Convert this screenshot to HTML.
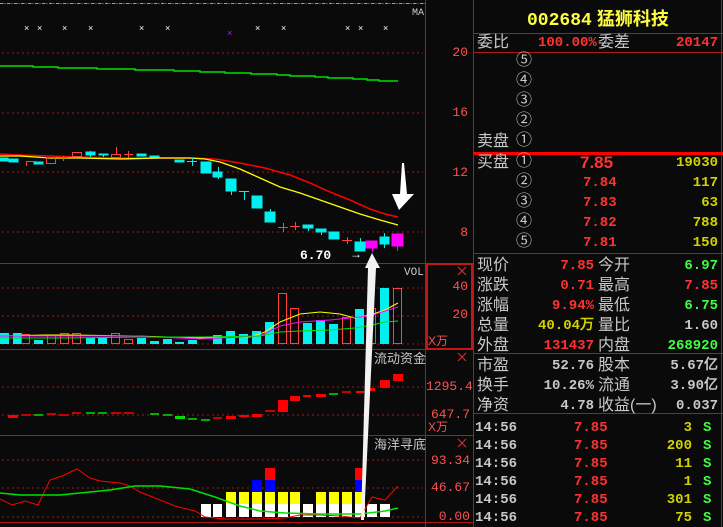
<!DOCTYPE html>
<html><head><meta charset="utf-8"><style>
html,body{margin:0;padding:0;background:#0a0a0a;width:723px;height:527px;overflow:hidden}
body{position:relative;font-family:"Liberation Sans","Noto Sans CJK SC",sans-serif}
.t{position:absolute;font-size:14px;line-height:16px;white-space:nowrap}
.r{text-align:right}
.g{color:#c8c8c8}.red{color:#ff3232}.y{color:#d2d200}.gr{color:#40ff40}.w{color:#e8e8e8}
.mono{font-family:"Liberation Mono",monospace;font-weight:bold}
.ax{position:absolute;font-family:"Liberation Mono",monospace;font-size:13px;color:#ff5050;text-align:right;width:40px;left:428px}
.c{font-size:16px}
</style></head><body>
<svg width="723" height="527" style="position:absolute;left:0;top:0">
<line x1="0" y1="3.5" x2="425" y2="3.5" stroke="#3cc" stroke-dasharray="4,3"/>
<line x1="0" y1="3.5" x2="425" y2="3.5" stroke="#b22" stroke-dasharray="3,4" stroke-dashoffset="4"/>
<line x1="425.5" y1="0" x2="425.5" y2="527" stroke="#b01818"/>
<line x1="473.5" y1="0" x2="473.5" y2="527" stroke="#b01818"/>
<line x1="721.5" y1="0" x2="721.5" y2="527" stroke="#b01818"/>
<line x1="0" y1="263.5" x2="473" y2="263.5" stroke="#b01818"/>
<line x1="0" y1="349.5" x2="473" y2="349.5" stroke="#b01818"/>
<line x1="0" y1="435.5" x2="473" y2="435.5" stroke="#b01818"/>
<line x1="0" y1="522.5" x2="473" y2="522.5" stroke="#b01818"/>
<rect x="427" y="264" width="45" height="85" fill="none" stroke="#c01818" stroke-width="2"/>
<g stroke="#a01818" stroke-dasharray="2,3">
<line x1="2" y1="53" x2="423" y2="53"/><line x1="2" y1="113" x2="423" y2="113"/>
<line x1="2" y1="172" x2="423" y2="172"/><line x1="2" y1="232" x2="423" y2="232"/>
<line x1="2" y1="288" x2="423" y2="288"/><line x1="2" y1="316" x2="423" y2="316"/><line x1="2" y1="344" x2="423" y2="344"/>
<line x1="2" y1="387" x2="423" y2="387"/><line x1="2" y1="415" x2="423" y2="415"/>
<line x1="2" y1="460" x2="423" y2="460"/><line x1="2" y1="488" x2="423" y2="488"/><line x1="2" y1="517" x2="423" y2="517"/>
</g>
<g stroke="#b01818"><line x1="473" y1="33.5" x2="723" y2="33.5"/><line x1="473" y1="52.5" x2="723" y2="52.5"/>
<line x1="473" y1="253.5" x2="723" y2="253.5"/><line x1="473" y1="353.5" x2="723" y2="353.5"/><line x1="473" y1="413.5" x2="723" y2="413.5"/></g>
<rect x="473" y="152" width="250" height="3" fill="#f00"/>
<g fill="#fff" font-size="9" font-family="Liberation Sans">
<text x="24" y="31">×</text><text x="37" y="31">×</text><text x="62" y="31">×</text><text x="88" y="31">×</text><text x="139" y="31">×</text><text x="165" y="31">×</text><text x="255" y="31">×</text><text x="281" y="31">×</text><text x="345" y="31">×</text><text x="358" y="31">×</text><text x="383" y="31">×</text></g>
<text x="227" y="36" fill="#a020f0" font-size="9">×</text>
<polyline fill="none" stroke="#00e000" stroke-width="1.5" points="0,66 33,66 33,67 58,67 58,68 97,68 97,69 135,69 135,70 174,70 174,71 200,71 200,72 225,72 225,73 251,73 251,74 277,74 277,75 290,75 290,76 315,76 315,77 328,77 328,78 353,78 353,79 367,79 367,80 379,80 379,81 398,81"/>
<polyline fill="none" stroke="#f00" stroke-width="1.5" points="0,154 20,155 50,156 80,157 120,158 160,158 190,158 215,159 240,163 265,168 290,175 310,183 330,192 350,200 370,209 385,214 398,217"/>
<polyline fill="none" stroke="#ff0" stroke-width="1.3" points="0,156 20,156 50,158 80,158 120,159 160,158 190,158 205,159 220,162 240,169 260,178 280,187 300,193 320,200 340,207 360,214 380,220 398,225"/>
<g fill="#00f0f0" stroke="#00f0f0">
<rect x="0" y="158" width="8" height="3"/><rect x="9" y="159" width="9" height="3"/><rect x="34" y="162" width="9" height="2"/>
<rect x="86" y="152" width="9" height="3"/><line x1="90.5" y1="151" x2="90.5" y2="157"/>
<rect x="99" y="154" width="9" height="1"/><line x1="103.5" y1="154" x2="103.5" y2="157"/>
<rect x="137" y="154" width="9" height="2"/><rect x="150" y="156" width="9" height="1"/>
<rect x="175" y="160" width="9" height="2"/><line x1="187" y1="161.5" x2="197" y2="161.5"/><line x1="192.5" y1="158" x2="192.5" y2="166"/>
<rect x="201" y="162" width="10" height="11"/>
<rect x="213" y="172" width="9" height="5"/><line x1="218.5" y1="167" x2="218.5" y2="179"/>
<rect x="226" y="179" width="10" height="12"/><line x1="231.5" y1="191" x2="231.5" y2="195"/>
<line x1="239" y1="191.5" x2="249" y2="191.5"/><line x1="244.5" y1="191" x2="244.5" y2="200"/>
<rect x="252" y="196" width="10" height="12"/><rect x="265" y="212" width="10" height="10"/><line x1="270.5" y1="209" x2="270.5" y2="212"/>
<rect x="303" y="225" width="10" height="3"/><line x1="308.5" y1="228" x2="308.5" y2="231"/>
<rect x="316" y="229" width="10" height="3"/><line x1="321.5" y1="232" x2="321.5" y2="235"/>
<rect x="329" y="232" width="10" height="7"/>
<rect x="355" y="242" width="10" height="9"/><line x1="360.5" y1="238" x2="360.5" y2="242"/>
<rect x="380" y="237" width="9" height="7"/><line x1="384.5" y1="233" x2="384.5" y2="248"/>
</g>
<g fill="none" stroke="#ff4040">
<line x1="26" y1="161.5" x2="36" y2="161.5"/><line x1="26.5" y1="161" x2="26.5" y2="166"/>
<rect x="46.5" y="157.5" width="9" height="6"/><line x1="59" y1="157.5" x2="68" y2="157.5"/><line x1="63.5" y1="156" x2="63.5" y2="161"/>
<rect x="72.5" y="152.5" width="9" height="4"/>
<rect x="111.5" y="154.5" width="9" height="3"/><line x1="116.5" y1="147" x2="116.5" y2="154"/>
<line x1="124" y1="154.5" x2="133" y2="154.5"/><line x1="128.5" y1="151" x2="128.5" y2="158"/>
<line x1="278" y1="227.5" x2="288" y2="227.5"/><line x1="283.5" y1="223" x2="283.5" y2="232"/>
<line x1="290" y1="226.5" x2="300" y2="226.5"/><line x1="295.5" y1="222" x2="295.5" y2="230"/>
<line x1="342" y1="240.5" x2="352" y2="240.5"/><line x1="347.5" y1="237" x2="347.5" y2="244"/>
</g>
<g fill="#f0f" stroke="#f0f"><rect x="366" y="241" width="11" height="7"/><line x1="372.5" y1="248" x2="372.5" y2="252"/>
<rect x="392" y="234" width="11" height="12"/><line x1="397.5" y1="246" x2="397.5" y2="251"/></g>
<text x="300" y="259" fill="#fff" font-size="13" font-weight="bold" font-family="Liberation Mono">6.70</text>
<text x="350" y="258" fill="#fff" font-size="12">→</text>
<g fill="#00f0f0"><rect x="0" y="333" width="9" height="11"/><rect x="13" y="333" width="9" height="11"/><rect x="34" y="340" width="9" height="4"/><rect x="86" y="338" width="9" height="6"/><rect x="98" y="338" width="9" height="6"/><rect x="137" y="338" width="9" height="6"/><rect x="150" y="341" width="9" height="3"/><rect x="163" y="339" width="9" height="5"/><rect x="175" y="342" width="9" height="2"/><rect x="188" y="340" width="9" height="4"/><rect x="213" y="335" width="9" height="9"/><rect x="226" y="331" width="9" height="13"/><rect x="239" y="334" width="9" height="10"/><rect x="252" y="331" width="9" height="13"/><rect x="265" y="322" width="9" height="22"/><rect x="303" y="323" width="9" height="21"/><rect x="316" y="320" width="9" height="24"/><rect x="329" y="324" width="9" height="20"/><rect x="355" y="309" width="9" height="35"/><rect x="380" y="288" width="9" height="56"/></g>
<g fill="none" stroke="#ff4040"><rect x="21.5" y="334.5" width="8" height="9"/><rect x="47.5" y="335.5" width="8" height="8"/><rect x="60.5" y="333.5" width="8" height="10"/><rect x="72.5" y="333.5" width="8" height="10"/><rect x="111.5" y="333.5" width="8" height="10"/><rect x="124.5" y="339.5" width="8" height="4"/><rect x="278.5" y="293.5" width="8" height="50"/><rect x="290.5" y="308.5" width="8" height="35"/><rect x="342.5" y="317.5" width="8" height="26"/><rect x="367.5" y="308.5" width="8" height="35"/><rect x="393.5" y="288.5" width="8" height="55"/></g>
<polyline fill="none" stroke="#ff0" points="0,336 45,335 70,335 135,336 200,338 250,337 265,332 280,322 300,314 320,312 340,314 355,318 370,315 385,310 398,303"/>
<polyline fill="none" stroke="#f0f" points="0,336 70,336 135,336 200,339 260,336 280,326 300,322 330,320 350,318 370,316 385,311 398,307"/>
<polyline fill="none" stroke="#00e000" points="0,338 70,338 135,337 200,337 260,336 280,332 300,331 330,330 355,328 372,325 385,322 398,321"/>
<g fill="#f00"><rect x="8" y="415" width="10" height="3"/><rect x="278" y="400" width="10" height="12"/><rect x="290" y="396" width="10" height="5"/><rect x="380" y="380" width="10" height="8"/><rect x="393" y="374" width="10" height="7"/><rect x="367" y="388" width="8" height="3"/><rect x="356" y="391" width="8" height="2"/><rect x="252" y="414" width="10" height="3"/><rect x="226" y="416" width="10" height="3"/><rect x="239" y="415" width="10" height="2"/><rect x="316" y="394" width="10" height="3"/><rect x="303" y="395" width="8" height="2"/></g>
<g stroke="#f00" stroke-width="1.5"><line x1="21" y1="415" x2="31" y2="415"/><line x1="47" y1="414" x2="56" y2="414"/><line x1="59" y1="415" x2="69" y2="415"/><line x1="72" y1="413" x2="81" y2="413"/><line x1="111" y1="413" x2="121" y2="413"/><line x1="124" y1="413" x2="134" y2="413"/><line x1="213" y1="418" x2="222" y2="418"/><line x1="265" y1="411" x2="275" y2="411"/><line x1="342" y1="392" x2="351" y2="392"/></g>
<g stroke="#00e000" stroke-width="1.5"><line x1="34" y1="415" x2="43" y2="415"/><line x1="86" y1="413" x2="95" y2="413"/><line x1="98" y1="413" x2="107" y2="413"/><line x1="150" y1="414" x2="159" y2="414"/><line x1="163" y1="415" x2="172" y2="415"/><line x1="188" y1="419" x2="197" y2="419"/><line x1="201" y1="420" x2="210" y2="420"/><line x1="329" y1="394" x2="338" y2="394"/></g>
<rect x="175" y="416" width="10" height="3" fill="#00e000"/>
<g fill="#fff"><rect x="201" y="504" width="10" height="13"/><rect x="213" y="504" width="9" height="13"/><rect x="226" y="504" width="10" height="13"/><rect x="239" y="504" width="10" height="13"/><rect x="252" y="504" width="10" height="13"/><rect x="265" y="504" width="10" height="13"/><rect x="278" y="504" width="10" height="13"/><rect x="290" y="504" width="10" height="13"/><rect x="303" y="504" width="10" height="13"/><rect x="316" y="504" width="10" height="13"/><rect x="329" y="504" width="10" height="13"/><rect x="342" y="504" width="10" height="13"/><rect x="355" y="504" width="10" height="13"/><rect x="367" y="504" width="10" height="13"/><rect x="380" y="504" width="10" height="13"/></g>
<g fill="#ff0"><rect x="226" y="492" width="10" height="12"/><rect x="239" y="492" width="10" height="12"/><rect x="252" y="492" width="10" height="12"/><rect x="265" y="492" width="10" height="12"/><rect x="278" y="492" width="10" height="12"/><rect x="290" y="492" width="10" height="12"/><rect x="316" y="492" width="10" height="12"/><rect x="329" y="492" width="10" height="12"/><rect x="342" y="492" width="10" height="12"/><rect x="355" y="492" width="10" height="12"/></g>
<g fill="#00f"><rect x="252" y="480" width="10" height="12"/><rect x="265" y="480" width="10" height="12"/><rect x="355" y="480" width="10" height="12"/></g>
<g fill="#f00"><rect x="265" y="468" width="10" height="12"/><rect x="355" y="468" width="10" height="12"/></g>
<polyline fill="none" stroke="#f00" points="0,499 12,505 25,501 38,505 50,480 62,476 77,469 90,478 100,481 120,483 130,486 140,492 160,500 175,506 195,511 205,517 225,519 260,519 285,518 300,515 320,515 340,516 360,518 372,497 385,500 398,486"/>
<polyline fill="none" stroke="#00e000" stroke-width="1.5" points="0,493 20,495 60,495 90,492 110,490 135,486 160,486 190,489 215,497 240,506 260,511 285,513 320,514 360,514 385,511 398,508"/>
<polygon fill="#fff" points="402,163 404,163 407,194 414,194 399,210 392,194 400,194"/>
<polygon fill="#f2f2f2" points="361,520 364,520 376,268 380,268 372,253 365,268 368,268"/>
<g stroke="#e03030"><path d="M458,267l8,8M466,267l-8,8M458,353l8,8M466,353l-8,8M458,439l8,8M466,439l-8,8"/></g>
</svg>
<div class="t" style="left:412px;top:6px;font-size:10px;color:#ccc;font-family:'Liberation Mono'">MA</div>
<div class="ax" style="top:45px">20</div><div class="ax" style="top:105px">16</div><div class="ax" style="top:165px">12</div><div class="ax" style="top:225px">8</div>
<div class="ax" style="top:279px">40</div><div class="ax" style="top:307px">20</div>
<div class="t" style="left:428px;top:333px;font-size:12px;color:#ff5050">X万</div>
<div class="t" style="left:404px;top:265px;font-size:11px;color:#ccc;font-family:'Liberation Mono'">VOL</div>
<div class="t g" style="left:374px;top:351px;font-size:13px">流动资金</div>
<div class="ax" style="top:379px;width:44px;left:426px">1295.4</div><div class="ax" style="top:407px;width:44px;left:426px">647.7</div>
<div class="t" style="left:428px;top:419px;font-size:12px;color:#ff5050">X万</div>
<div class="t g" style="left:374px;top:437px;font-size:13px">海洋寻底</div>
<div class="ax" style="top:453px;width:44px;left:426px">93.34</div><div class="ax" style="top:480px;width:44px;left:426px">46.67</div><div class="ax" style="top:509px;width:44px;left:426px">0.00</div>
<div class="t" style="left:527px;top:8px;font-size:18px;line-height:22px;color:#ffff40;font-weight:bold"><span style="font-family:'Liberation Mono'">002684</span> 猛狮科技</div>
<div class="t g" style="left:477px;top:34px;font-size:16px;line-height:18px">委比</div>
<div class="t red mono" style="left:538px;top:35px">100.00%</div>
<div class="t g" style="left:598px;top:34px;font-size:16px;line-height:18px">委差</div>
<div class="t red mono r" style="right:5px;top:35px">20147</div>
<div class="t g c" style="left:516px;top:53px">⑤</div><div class="t g c" style="left:516px;top:73px">④</div><div class="t g c" style="left:516px;top:93px">③</div><div class="t g c" style="left:516px;top:113px">②</div>
<div class="t g" style="left:477px;top:133px;font-size:16px;line-height:18px">卖盘</div><div class="t g c" style="left:516px;top:133px">①</div>
<div class="t g" style="left:477px;top:154px;font-size:16px;line-height:18px">买盘</div><div class="t g c" style="left:516px;top:154px">①</div>
<div class="t red" style="left:580px;top:153px;font-size:17px;line-height:20px;font-weight:bold">7.85</div>
<div class="t y mono r" style="right:5px;top:155px">19030</div>
<div class="t g c" style="left:516px;top:174px">②</div><div class="t red mono" style="left:583px;top:175px">7.84</div><div class="t y mono r" style="right:5px;top:175px">117</div>
<div class="t g c" style="left:516px;top:194px">③</div><div class="t red mono" style="left:583px;top:195px">7.83</div><div class="t y mono r" style="right:5px;top:195px">63</div>
<div class="t g c" style="left:516px;top:214px">④</div><div class="t red mono" style="left:583px;top:215px">7.82</div><div class="t y mono r" style="right:5px;top:215px">788</div>
<div class="t g c" style="left:516px;top:234px">⑤</div><div class="t red mono" style="left:583px;top:235px">7.81</div><div class="t y mono r" style="right:5px;top:235px">150</div>
<div style="position:absolute;left:477px;top:256px;width:241px">
<div class="t g" style="left:0;top:0;font-size:16px;line-height:20px">现价<br>涨跌<br>涨幅<br>总量<br>外盘</div>
<div class="t g" style="left:121px;top:0;font-size:16px;line-height:20px">今开<br>最高<br>最低<br>量比<br>内盘</div>
<div class="t mono r" style="right:124px;top:0;line-height:20px"><span class="red">7.85</span><br><span class="red">0.71</span><br><span class="red">9.94%</span><br><span class="y">40.04万</span><br><span class="red">131437</span></div>
<div class="t mono r" style="right:0;top:0;line-height:20px"><span class="gr">6.97</span><br><span class="red">7.85</span><br><span class="gr">6.75</span><br><span class="g">1.60</span><br><span class="gr">268920</span></div>
<div class="t g" style="left:0;top:100px;font-size:16px;line-height:20px">市盈<br>换手<br>净资</div>
<div class="t g" style="left:121px;top:100px;font-size:16px;line-height:20px">股本<br>流通<br>收益(一)</div>
<div class="t mono r g" style="right:124px;top:100px;line-height:20px">52.76<br>10.26%<br>4.78</div>
<div class="t mono r g" style="right:0;top:100px;line-height:20px">5.67亿<br>3.90亿<br>0.037</div>
</div>
<div class="t g mono" style="left:475px;top:419px;line-height:18px">14:56<br>14:56<br>14:56<br>14:56<br>14:56<br>14:56</div>
<div class="t red mono" style="left:574px;top:419px;line-height:18px">7.85<br>7.85<br>7.85<br>7.85<br>7.85<br>7.85</div>
<div class="t y mono r" style="right:31px;top:419px;line-height:18px">3<br>200<br>11<br>1<br>301<br>75</div>
<div class="t gr mono" style="left:703px;top:419px;line-height:18px">S<br>S<br>S<br>S<br>S<br>S</div>
</body></html>
